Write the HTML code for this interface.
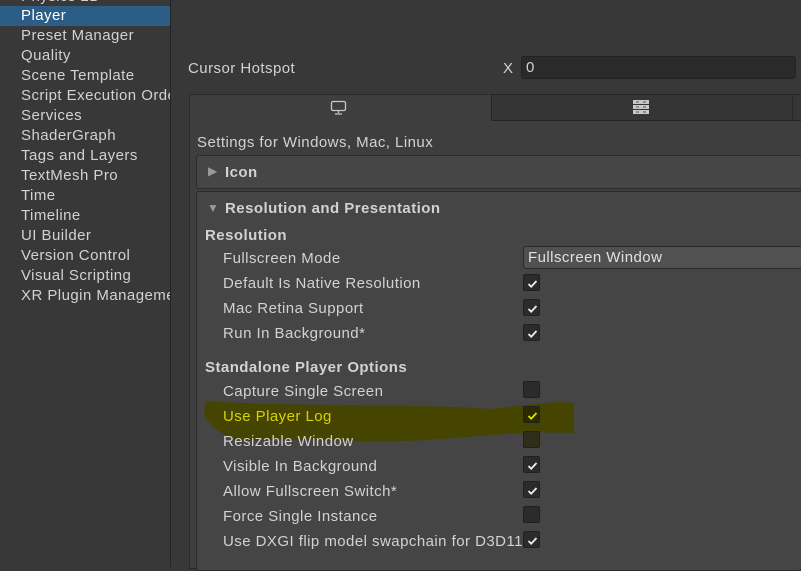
<html><head><style>
body{margin:0;width:801px;height:567px;background:#383838;font-family:"Liberation Sans",sans-serif;font-size:15px;letter-spacing:0.45px;color:#d2d2d2;position:relative;overflow:hidden}
.a{position:absolute;white-space:nowrap}
.side{position:absolute;left:0;top:0;width:170px;height:567px;background:#383838;border-right:1px solid #232323;overflow:hidden}
.side div{position:absolute;left:21px;height:20px;line-height:20px;white-space:nowrap}
.cb{position:absolute;left:523px;width:17px;height:17px;background:#2b2b2b;border:1px solid #202020;border-radius:2px;box-sizing:border-box}
.cb svg{position:absolute;left:1px;top:1px}
.b{font-weight:bold}
</style></head><body>
<div class="side">
<div style="top:-13px">Physics 2D</div>
<div style="top:6px;left:0;width:170px;background:#2c5d87;padding-left:21px;box-sizing:border-box;color:#fff">Player</div>
<div style="top:26px">Preset Manager</div>
<div style="top:46px">Quality</div>
<div style="top:66px">Scene Template</div>
<div style="top:86px">Script Execution Order</div>
<div style="top:106px">Services</div>
<div style="top:126px">ShaderGraph</div>
<div style="top:146px">Tags and Layers</div>
<div style="top:166px">TextMesh Pro</div>
<div style="top:186px">Time</div>
<div style="top:206px">Timeline</div>
<div style="top:226px">UI Builder</div>
<div style="top:246px">Version Control</div>
<div style="top:266px">Visual Scripting</div>
<div style="top:286px">XR Plugin Management</div>
</div>
<div class="a" style="left:188px;top:60px">Cursor Hotspot</div>
<div class="a" style="left:503px;top:60px">X</div>
<div class="a" style="left:521px;top:56px;width:275px;height:23px;background:#2a2a2a;border:1px solid #222;border-radius:3px;box-sizing:border-box;padding-left:4px;line-height:21px">0</div>
<div class="a" style="left:189px;top:94px;width:612px;height:473px;background:#3e3e3e;border:1px solid #2a2a2a;border-radius:3px 0 0 0"></div>
<div class="a" style="left:491px;top:94px;width:302px;height:27px;background:#353535;border:1px solid #262626;box-sizing:border-box"></div>
<div class="a" style="left:793px;top:94px;width:8px;height:27px;background:#353535;border-top:1px solid #262626;border-bottom:1px solid #262626;box-sizing:border-box"></div>
<svg class="a" style="left:330px;top:100px" width="18" height="16"><rect x="1.5" y="1.5" width="14" height="9" rx="1.5" fill="none" stroke="#c8c8c8" stroke-width="1.3"/><path d="M8.5 11v2M5 14h7" stroke="#c8c8c8" stroke-width="1.3"/></svg>
<svg class="a" style="left:633px;top:100px" width="16" height="14"><rect x="0" y="0" width="16" height="4" fill="#c8c8c8"/><rect x="0" y="5" width="16" height="4" fill="#c8c8c8"/><rect x="0" y="10" width="16" height="4" fill="#c8c8c8"/><path d="M3 2h3M10 2h3M3 7h3M10 7h3M3 12h3M10 12h3" stroke="#555" stroke-width="1"/></svg>
<div class="a" style="left:197px;top:134px">Settings for Windows, Mac, Linux</div>
<div class="a" style="left:196px;top:155px;width:606px;height:34px;background:#464646;border:1px solid #2b2b2b;border-radius:3px;box-sizing:border-box"></div>
<div class="a" style="left:208px;top:164px;font-size:12px;color:#999">▶</div>
<div class="a b" style="left:225px;top:164px">Icon</div>
<div class="a" style="left:196px;top:191px;width:606px;height:380px;background:#454545;border:1px solid #2b2b2b;border-radius:3px;box-sizing:border-box"></div>
<div class="a" style="left:207px;top:201px;font-size:12px;color:#999">▼</div>
<div class="a b" style="left:225px;top:200px">Resolution and Presentation</div>
<div class="a b" style="left:205px;top:227px">Resolution</div>
<div class="a" style="left:223px;top:250px">Fullscreen Mode</div>
<div class="a" style="left:523px;top:246px;width:280px;height:23px;background:#515151;border:1px solid #2a2a2a;border-radius:3px;box-sizing:border-box;padding-left:4px;line-height:21px;color:#e0e0e0">Fullscreen Window</div>
<div class="a" style="left:223px;top:275px">Default Is Native Resolution</div>
<div class="a" style="left:223px;top:300px">Mac Retina Support</div>
<div class="a" style="left:223px;top:325px">Run In Background*</div>
<div class="a b" style="left:205px;top:359px">Standalone Player Options</div>
<svg class="a" style="left:200px;top:395px" width="380" height="55"><path d="M6 6 C80 12 200 8 290 14 C340 8 360 6 374 8 L374 38 C320 36 300 40 240 44 C170 50 110 42 40 46 C20 40 10 30 4 20 Z" fill="#454400"/></svg>
<div class="a" style="left:223px;top:383px">Capture Single Screen</div>
<div class="a" style="left:223px;top:408px;color:#d4d400">Use Player Log</div>
<div class="a" style="left:223px;top:433px">Resizable Window</div>
<div class="a" style="left:223px;top:458px">Visible In Background</div>
<div class="a" style="left:223px;top:483px">Allow Fullscreen Switch*</div>
<div class="a" style="left:223px;top:508px">Force Single Instance</div>
<div class="a" style="left:223px;top:533px">Use DXGI flip model swapchain for D3D11</div>
<div class="cb" style="top:274px"><svg width="15" height="15"><path d="M3.5 8l2.7 2.7L11.5 5" stroke="#eee" stroke-width="1.8" fill="none"/></svg></div>
<div class="cb" style="top:299px"><svg width="15" height="15"><path d="M3.5 8l2.7 2.7L11.5 5" stroke="#eee" stroke-width="1.8" fill="none"/></svg></div>
<div class="cb" style="top:324px"><svg width="15" height="15"><path d="M3.5 8l2.7 2.7L11.5 5" stroke="#eee" stroke-width="1.8" fill="none"/></svg></div>
<div class="cb" style="top:381px"></div>
<div class="cb" style="top:406px;background:#2b2b00"><svg width="15" height="15"><path d="M3.5 8l2.7 2.7L11.5 5" stroke="#e0e000" stroke-width="1.8" fill="none"/></svg></div>
<div class="cb" style="top:431px;background:#2e2e1a"></div>
<div class="cb" style="top:456px"><svg width="15" height="15"><path d="M3.5 8l2.7 2.7L11.5 5" stroke="#eee" stroke-width="1.8" fill="none"/></svg></div>
<div class="cb" style="top:481px"><svg width="15" height="15"><path d="M3.5 8l2.7 2.7L11.5 5" stroke="#eee" stroke-width="1.8" fill="none"/></svg></div>
<div class="cb" style="top:506px"></div>
<div class="cb" style="top:531px"><svg width="15" height="15"><path d="M3.5 8l2.7 2.7L11.5 5" stroke="#eee" stroke-width="1.8" fill="none"/></svg></div>
</body></html>
